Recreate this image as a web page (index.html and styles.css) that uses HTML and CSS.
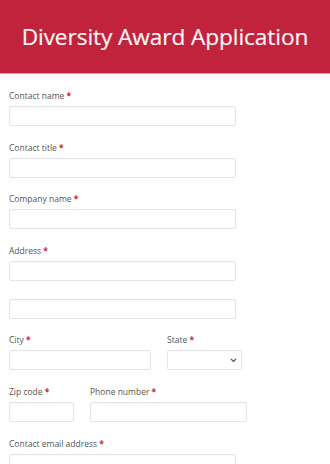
FILE: index.html
```html
<!DOCTYPE html>
<html lang="en">
<head>
    <meta charset="UTF-8">
    <meta name="viewport" content="width=device-width, initial-scale=1.0">
    <title>Diversity Award Application</title>
    <link rel="stylesheet" href="styles.css">
</head>
<body>
    <header class="banner">
        <h1>Diversity Award Application</h1>
    </header>

    <form class="award-form">
        <div class="field">
            <label for="contactName">Contact name <span class="req">*</span></label>
            <input type="text" id="contactName" class="wide">
        </div>
        <div class="field">
            <label for="contactTitle">Contact title <span class="req">*</span></label>
            <input type="text" id="contactTitle" class="wide">
        </div>
        <div class="field">
            <label for="company">Company name <span class="req">*</span></label>
            <input type="text" id="company" class="wide">
        </div>
        <div class="field">
            <label for="address1">Address <span class="req">*</span></label>
            <input type="text" id="address1" class="wide">
            <input type="text" id="address2" class="wide extra">
        </div>

        <div class="row">
            <div class="field city">
                <label for="city">City <span class="req">*</span></label>
                <input type="text" id="city">
            </div>
            <div class="field state">
                <label for="state">State <span class="req">*</span></label>
                <div class="select-wrap">
                    <select id="state">
                        <option></option>
                    </select>
                    <svg class="chevron" width="7" height="5" viewBox="0 0 7 5">
                        <path d="M1 1l2.5 2.5 2.5-2.5" fill="none" stroke="#555" stroke-width="1.2"/>
                    </svg>
                </div>
            </div>
        </div>

        <div class="row">
            <div class="field zip">
                <label for="zip">Zip code <span class="req">*</span></label>
                <input type="text" id="zip">
            </div>
            <div class="field phone">
                <label for="phone">Phone number <span class="req">*</span></label>
                <input type="tel" id="phone">
            </div>
        </div>

        <div class="field">
            <label for="email">Contact email address <span class="req">*</span></label>
            <input type="email" id="email" class="wide">
        </div>
    </form>
</body>
</html>
```

FILE: styles.css
```css
body {
    font-family: "Open Sans", Arial, sans-serif;
    margin: 0;
    background-color: #ffffff;
    color: #555;
}
.banner {
    background-color: #c1233d;
    height: 74px;
    display: flex;
    align-items: center;
    justify-content: center;
    border-bottom: 1px solid #d9a0a9;
    box-sizing: border-box;
}
.banner h1 {
    margin: 0;
    color: #fdf3f4;
    font-weight: normal;
    font-size: 22.7px;
    letter-spacing: -0.1px;
    -webkit-text-stroke: 0.2px #fdf3f4;
}
.award-form {
    padding: 15px 9px 0;
}
.field {
    margin-bottom: 14.6px;
}
.field label {
    display: block;
    font-size: 8.5px;
    line-height: 14px;
    margin-bottom: 3px;
    color: #555;
}
.req {
    color: #d4203a;
    font-weight: bold;
}
.field input,
.field select {
    display: block;
    height: 20px;
    border: 1px solid #e4e4e4;
    border-radius: 2px;
    box-sizing: border-box;
    background: #fff;
    padding: 0 4px;
    font-family: inherit;
    box-shadow: inset 0 1px 1px rgba(0,0,0,0.02);
}
.wide {
    width: 227px;
}
.extra {
    margin-top: 18px;
}
.row {
    display: flex;
    gap: 16px;
}
.city input {
    width: 142px;
}
.state select {
    width: 75px;
    appearance: none;
    -webkit-appearance: none;
}
.select-wrap {
    position: relative;
}
.chevron {
    position: absolute;
    right: 5px;
    top: 8px;
}
.zip input {
    width: 65px;
}
.phone input {
    width: 157px;
}
```
